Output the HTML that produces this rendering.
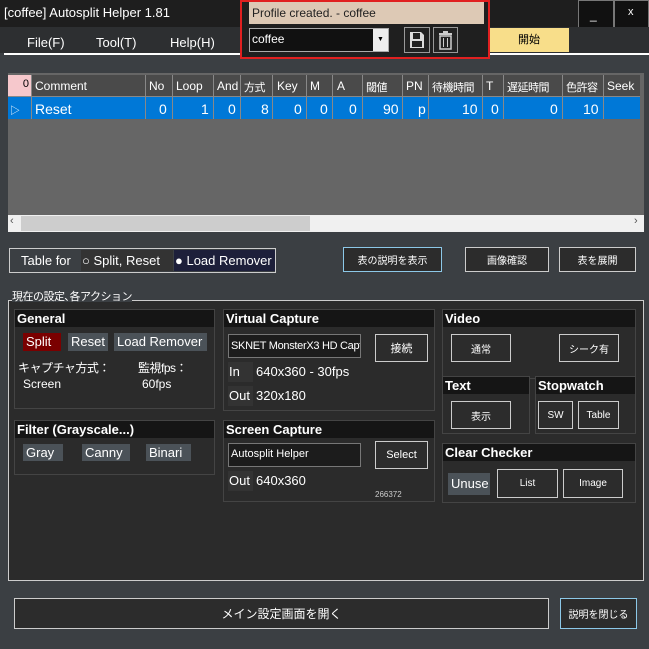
<!DOCTYPE html>
<html><head><meta charset="utf-8"><style>
*{margin:0;padding:0;box-sizing:border-box}
body{width:649px;height:649px;background:#3b3f43;font-family:"Liberation Sans","Noto Sans CJK JP",sans-serif;color:#fff;position:relative;overflow:hidden;font-size:12px}
.a{position:absolute}
.t{white-space:nowrap}
.btn{position:absolute;border:1px solid #ccc;background:#2c2c2c;color:#fff;font-size:10px;display:flex;align-items:center;justify-content:center}
.pan{position:absolute;background:#2b2b2b;border:1px solid #444}
.hd{position:absolute;left:0;right:0;top:0;height:17px;background:#151515;font-weight:bold;font-size:13px;padding-left:2px;line-height:17px}
.chip{position:absolute;background:#4b5258;font-size:12px;padding:0 3px;line-height:17px;height:17px}
.col{position:absolute;top:0;height:100%;border-left:1px solid #888}
.j{font-size:11px;letter-spacing:-0.5px}
</style></head><body>
<!-- title bar -->
<div class="a" style="left:0;top:0;width:649px;height:27px;background:#1e1e1e"></div>
<div class="a t" style="left:4px;top:5px;font-size:13px">[coffee] Autosplit Helper 1.81</div>
<div class="a" style="left:578px;top:0;width:36px;height:32px;border:1px solid #777;background:#111"></div>
<div class="a t" style="left:590px;top:8px">_</div>
<div class="a" style="left:614px;top:0;width:35px;height:32px;border:1px solid #777;background:#111"></div>
<div class="a t" style="left:628px;top:6px;font-size:11px">x</div>
<!-- menu -->
<div class="a" style="left:0;top:27px;width:649px;height:26px;background:#2d2f31"></div>
<div class="a" style="left:4px;top:53px;width:645px;height:2px;background:#fff"></div>
<div class="a t" style="left:27px;top:35px;font-size:13px">File(F)</div>
<div class="a t" style="left:96px;top:35px;font-size:13px">Tool(T)</div>
<div class="a t" style="left:170px;top:35px;font-size:13px">Help(H)</div>
<div class="a" style="left:489px;top:28px;width:80px;height:24px;background:#f8de8a;color:#000;font-size:11px;text-align:center;line-height:24px">開始</div>
<!-- profile box -->
<div class="a" style="left:240px;top:0;width:250px;height:59px;border:2px solid #e02020;background:#1f1f1f"></div>
<div class="a t" style="left:249px;top:2px;width:235px;height:22px;background:#ddc9b5;color:#222;font-size:12px;line-height:22px;padding-left:3px">Profile created. - coffee</div>
<div class="a" style="left:249px;top:28px;width:140px;height:24px;background:#111;border:1px solid #aaa"></div>
<div class="a t" style="left:252px;top:32px;font-size:12px">coffee</div>
<div class="a" style="left:373px;top:29px;width:15px;height:22px;background:#eee;color:#000;font-size:7px;text-align:center;line-height:22px">▼</div>
<div class="a" style="left:404px;top:27px;width:26px;height:26px;border:1px solid #999;background:#222"></div>
<svg class="a" style="left:407px;top:30px" width="20" height="20" viewBox="0 0 20 20"><path d="M3 2h11l3 3v13H3z" fill="#ddd"/><rect x="6" y="3" width="7" height="6" fill="#222"/><rect x="5" y="11" width="10" height="6" fill="#222"/></svg>
<div class="a" style="left:433px;top:27px;width:25px;height:26px;border:1px solid #999;background:#222"></div>
<svg class="a" style="left:436px;top:30px" width="19" height="20" viewBox="0 0 19 20"><rect x="3" y="3" width="13" height="2" fill="#ccc"/><rect x="7" y="1" width="5" height="2" fill="#ccc"/><path d="M4 6h11v13H4z" fill="none" stroke="#ccc" stroke-width="1.5"/><path d="M7.5 8v9M11.5 8v9" stroke="#ccc"/></svg>
<!-- grid -->
<div class="a" style="left:8px;top:73px;width:636px;height:148px;background:#666"></div>
<div class="a" style="left:8px;top:75px;width:632px;height:21px;background:#4a4a4a;font-size:12px">
<div class="a" style="left:0;top:0;width:23px;height:21px;background:#f6c8cc;color:#000;text-align:right;font-size:11px;line-height:18px;padding-right:2px">0</div>
</div>
<div class="a" style="left:8px;top:97px;width:632px;height:22px;background:#0078d7"></div>
<div class="a" style="left:8px;top:75px;width:632px;height:44px">
<div class="col" style="left:23px"></div><div class="col" style="left:137px"></div><div class="col" style="left:164px"></div><div class="col" style="left:205px"></div><div class="col" style="left:232px"></div><div class="col" style="left:264px"></div><div class="col" style="left:298px"></div><div class="col" style="left:324px"></div><div class="col" style="left:354px"></div><div class="col" style="left:394px"></div><div class="col" style="left:420px"></div><div class="col" style="left:474px"></div><div class="col" style="left:495px"></div><div class="col" style="left:554px"></div><div class="col" style="left:595px"></div>
<div class="a" style="left:0;top:21px;width:632px;height:1px;background:#888"></div>
</div>
<div class="a t" style="left:0;top:79px;font-size:12px;width:649px;height:16px">
<span class="a" style="left:35px">Comment</span><span class="a" style="left:149px">No</span><span class="a" style="left:176px">Loop</span><span class="a" style="left:217px">And</span><span class="a j" style="left:244px">方式</span><span class="a" style="left:277px">Key</span><span class="a" style="left:310px">M</span><span class="a" style="left:337px">A</span><span class="a j" style="left:366px">閾値</span><span class="a" style="left:406px">PN</span><span class="a j" style="left:432px">待機時間</span><span class="a" style="left:486px">T</span><span class="a j" style="left:507px">遅延時間</span><span class="a j" style="left:566px">色許容</span><span class="a" style="left:607px">Seek</span>
</div>
<div class="a t" style="left:0;top:101px;font-size:14px;width:649px;height:18px">
<span class="a" style="left:10px;font-size:10px;top:1px">▷</span><span class="a" style="left:35px">Reset</span>
<span class="a" style="left:159px">0</span><span class="a" style="left:201px">1</span><span class="a" style="left:228px">0</span><span class="a" style="left:261px">8</span><span class="a" style="left:294px">0</span><span class="a" style="left:320px">0</span><span class="a" style="left:349px">0</span><span class="a" style="left:383px">90</span><span class="a" style="left:418px">p</span><span class="a" style="left:462px">10</span><span class="a" style="left:491px">0</span><span class="a" style="left:550px">0</span><span class="a" style="left:583px">10</span>
</div>
<!-- scrollbar -->
<div class="a" style="left:8px;top:215px;width:636px;height:17px;background:#f0f0f0"></div>
<div class="a" style="left:21px;top:216px;width:289px;height:15px;background:#cdcdcd"></div>
<div class="a t" style="left:10px;top:215px;color:#555;font-size:11px">‹</div>
<div class="a t" style="left:634px;top:215px;color:#555;font-size:11px">›</div>
<!-- table for -->
<div class="a" style="left:9px;top:248px;width:267px;height:25px;border:1px solid #ccc;background:#3b3f43"></div>
<div class="a t" style="left:21px;top:253px;font-size:13px">Table for</div>
<div class="a t" style="left:81px;top:250px;width:92px;height:21px;background:#333;font-size:13px;line-height:21px;padding-left:1px">○ Split, Reset</div>
<div class="a t" style="left:174px;top:250px;width:101px;height:21px;background:#1d1f3a;font-size:13px;line-height:21px;padding-left:1px">● Load Remover</div>
<div class="btn" style="left:343px;top:247px;width:99px;height:25px;border-color:#8cc8e8">表の説明を表示</div>
<div class="btn" style="left:465px;top:247px;width:84px;height:25px">画像確認</div>
<div class="btn" style="left:559px;top:247px;width:77px;height:25px">表を展開</div>
<!-- group -->
<div class="a" style="left:8px;top:301px;width:636px;height:280px;border:1px solid #ccc;border-top:none;background:#2b2b2b"></div>
<div class="a" style="left:8px;top:300px;width:636px;height:1px;background:#ccc"></div>
<div class="a t j" style="left:12px;top:288px;background:#3b3f43;height:14px">現在の設定､各アクション</div>
<!-- General -->
<div class="pan" style="left:14px;top:309px;width:201px;height:100px"><div class="hd">General</div></div>
<div class="a t" style="left:23px;top:333px;width:38px;height:18px;background:#7a0000;font-size:13px;line-height:18px;padding-left:3px">Split</div>
<div class="chip" style="left:68px;top:333px;height:18px;font-size:13px">Reset</div>
<div class="chip" style="left:114px;top:333px;width:93px;height:18px;font-size:13px">Load Remover</div>
<div class="a t j" style="left:18px;top:359px;font-size:12px">キャプチャ方式：</div>
<div class="a t j" style="left:138px;top:359px;font-size:12px">監視fps：</div>
<div class="a t" style="left:23px;top:377px;font-size:12px">Screen</div>
<div class="a t" style="left:142px;top:377px;font-size:12px">60fps</div>
<!-- Filter -->
<div class="pan" style="left:14px;top:420px;width:201px;height:55px"><div class="hd">Filter (Grayscale...)</div></div>
<div class="chip" style="left:23px;top:444px;width:40px;font-size:13px">Gray</div>
<div class="chip" style="left:82px;top:444px;width:48px;font-size:13px">Canny</div>
<div class="chip" style="left:146px;top:444px;width:45px;font-size:13px">Binari</div>
<!-- Virtual capture -->
<div class="pan" style="left:223px;top:309px;width:212px;height:102px"><div class="hd">Virtual Capture</div></div>
<div class="a t" style="left:228px;top:334px;width:133px;height:24px;background:#1c1c1c;border:1px solid #777;font-size:11px;line-height:22px;padding-left:2px;overflow:hidden;letter-spacing:-0.3px">SKNET MonsterX3 HD Capt</div>
<div class="btn" style="left:375px;top:334px;width:53px;height:28px;font-size:11px">接続</div>
<div class="a t" style="left:228px;top:362px;width:25px;height:20px;background:#333;font-size:13px;line-height:20px;padding-left:1px">In</div>
<div class="a t" style="left:256px;top:362px;font-size:13px;line-height:20px">640x360 - 30fps</div>
<div class="a t" style="left:228px;top:386px;width:25px;height:20px;background:#333;font-size:13px;line-height:20px;padding-left:1px">Out</div>
<div class="a t" style="left:256px;top:386px;font-size:13px;line-height:20px">320x180</div>
<!-- Screen capture -->
<div class="pan" style="left:223px;top:420px;width:212px;height:82px"><div class="hd">Screen Capture</div></div>
<div class="a t" style="left:228px;top:443px;width:133px;height:24px;background:#1c1c1c;border:1px solid #777;font-size:11px;line-height:20px;padding-left:2px">Autosplit Helper</div>
<div class="btn" style="left:375px;top:441px;width:53px;height:28px;font-size:11px">Select</div>
<div class="a t" style="left:228px;top:471px;width:25px;height:20px;background:#333;font-size:13px;line-height:20px;padding-left:1px">Out</div>
<div class="a t" style="left:256px;top:471px;font-size:13px;line-height:20px">640x360</div>
<div class="a t" style="left:375px;top:490px;font-size:8px;color:#ccc">266372</div>
<!-- Video -->
<div class="pan" style="left:442px;top:309px;width:194px;height:70px"><div class="hd">Video</div></div>
<div class="btn" style="left:451px;top:334px;width:60px;height:28px">通常</div>
<div class="btn" style="left:559px;top:334px;width:60px;height:28px">シーク有</div>
<!-- Text -->
<div class="pan" style="left:442px;top:376px;width:88px;height:58px"><div class="hd">Text</div></div>
<div class="btn" style="left:451px;top:401px;width:60px;height:28px">表示</div>
<!-- Stopwatch -->
<div class="pan" style="left:535px;top:376px;width:101px;height:58px"><div class="hd">Stopwatch</div></div>
<div class="btn" style="left:538px;top:401px;width:35px;height:28px">SW</div>
<div class="btn" style="left:578px;top:401px;width:41px;height:28px">Table</div>
<!-- Clear checker -->
<div class="pan" style="left:442px;top:443px;width:194px;height:60px"><div class="hd">Clear Checker</div></div>
<div class="chip" style="left:448px;top:473px;width:42px;height:22px;line-height:22px;font-size:13px">Unuse</div>
<div class="btn" style="left:497px;top:469px;width:61px;height:29px">List</div>
<div class="btn" style="left:563px;top:469px;width:60px;height:29px">Image</div>
<!-- bottom -->
<div class="btn" style="left:14px;top:598px;width:535px;height:31px;font-size:12px">メイン設定画面を開く</div>
<div class="btn" style="left:560px;top:598px;width:77px;height:31px;border-color:#8cc8e8">説明を閉じる</div>
</body></html>
